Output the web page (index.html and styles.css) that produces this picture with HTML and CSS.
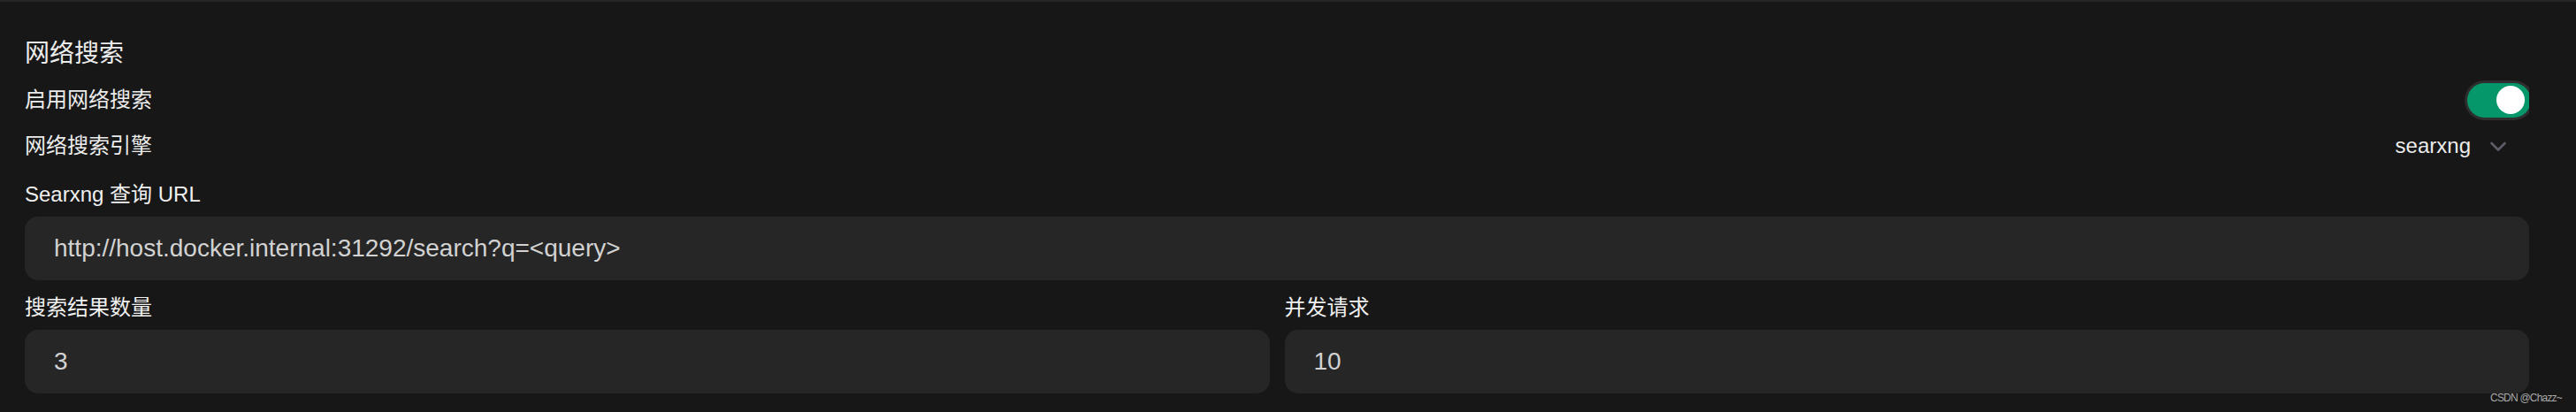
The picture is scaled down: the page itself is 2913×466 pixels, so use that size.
FILE: index.html
```html
<!DOCTYPE html>
<html lang="zh-CN">
<head>
<meta charset="utf-8">
<title>网络搜索</title>
<link rel="stylesheet" href="styles.css">
</head>
<body>
<div class="panel">
  <h2 class="title">网络搜索</h2>
  <div class="row">
    <span class="row-label">启用网络搜索</span>
    <button class="toggle" type="button" aria-pressed="true"><span class="knob"></span></button>
  </div>
  <div class="row row-select">
    <span class="row-label">网络搜索引擎</span>
    <div class="select">
      <span>searxng</span>
      <svg class="chev" width="20" height="12" viewBox="0 0 20 12"><path d="M2.5 2 L10 9.5 L17.5 2" fill="none" stroke="#5d5d68" stroke-width="2.6" stroke-linecap="round" stroke-linejoin="round"/></svg>
    </div>
  </div>
  <div class="field field-url">
    <label class="field-label">Searxng 查询 URL</label>
    <input class="text-input" type="text" value="http://host.docker.internal:31292/search?q=&lt;query&gt;">
  </div>
  <div class="grid2">
    <div class="field">
      <label class="field-label">搜索结果数量</label>
      <input class="text-input" type="text" value="3">
    </div>
    <div class="field">
      <label class="field-label">并发请求</label>
      <input class="text-input" type="text" value="10">
    </div>
  </div>
</div>
<div class="watermark">CSDN @Chazz~</div>
</body>
</html>
```
FILE: styles.css
```css
html {
  background: #171717;
}
body {
  margin: 0;
  height: 464px;
  border-top: 2px solid #262626;
  background: #171717;
  font-family: "Liberation Sans", "Noto Sans CJK SC", sans-serif;
  color: #ececec;
  position: relative;
  overflow: hidden;
}
.panel {
  margin-right: 53px;
  padding: 38px 0 0 28px;
  overflow: hidden;
}
.title {
  margin: 0;
  font-size: 28px;
  font-weight: 400;
  line-height: 42px;
  color: #ececec;
}
.row {
  display: flex;
  align-items: center;
  justify-content: space-between;
  height: 42px;
  margin-top: 10px;
  font-size: 24px;
}
.row-select {
  margin-top: 10px;
}
.row-label {
  line-height: 42px;
}
.toggle {
  position: relative;
  width: 72px;
  height: 39px;
  border: none;
  padding: 0;
  border-radius: 999px;
  background: #059669;
  box-shadow: 0 0 0 3px #2e2e2e;
  margin-right: -2px;
}
.knob {
  position: absolute;
  top: 3.5px;
  right: 7px;
  width: 32px;
  height: 32px;
  border-radius: 50%;
  background: #ffffff;
}
.select {
  display: flex;
  align-items: center;
  gap: 21px;
  padding-right: 25px;
  font-size: 24px;
  color: #ececec;
}
.chev {
  display: block;
  margin-top: 2px;
}
.field {
  display: flex;
  flex-direction: column;
  gap: 8px;
}
.field-url {
  margin-top: 17px;
}
.field-label {
  font-size: 24px;
  line-height: 34px;
  font-weight: 400;
  color: #f0f0f0;
}
.text-input {
  box-sizing: border-box;
  width: 100%;
  height: 72px;
  border: none;
  outline: none;
  border-radius: 15px;
  background: #262626;
  padding: 0 33px;
  font-family: "Liberation Sans", "Noto Sans CJK SC", sans-serif;
  font-size: 28px;
  color: #d2d2d2;
}
.grid2 {
  display: grid;
  grid-template-columns: 1fr 1fr;
  gap: 17px;
  margin-top: 14px;
}
.watermark {
  position: absolute;
  right: 16px;
  top: 441px;
  font-size: 12px;
  letter-spacing: -0.8px;
  color: #a8a8a8;
}
```
